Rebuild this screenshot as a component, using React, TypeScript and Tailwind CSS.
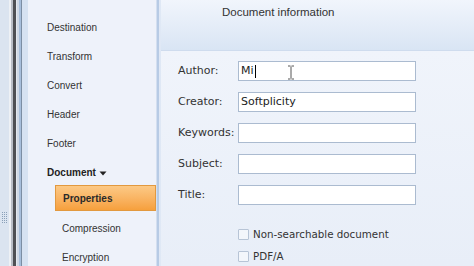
import React from "react";

const sideItems = ["Destination", "Transform", "Convert", "Header", "Footer"];

function Field({ label, value, caret }: { label: string; value?: string; caret?: boolean }) {
  return (
    <div className="flex items-center h-[20px]">
      <div className="w-[60px] text-[11px] text-[#333]" style={{ fontFamily: '"DejaVu Sans", sans-serif' }}>
        {label}
      </div>
      <div className="relative w-[178px] h-[20px] border border-[#abbbd0] bg-white flex items-center pl-[2px] text-[11px] text-[#222]" style={{ fontFamily: '"DejaVu Sans", sans-serif' }}>
        <span>{value}</span>
        {caret && <span className="w-px h-[13px] bg-black ml-px" />}
        {caret && (
          <svg className="absolute left-[48px] top-[3px]" width="8" height="15" viewBox="0 0 8 15">
            <path d="M1 1h2.5M4.5 1H7M4 1.5v12M1 14h2.5M4.5 14H7" stroke="#555" strokeWidth="1" fill="none" />
          </svg>
        )}
      </div>
    </div>
  );
}

function Check({ label }: { label: string }) {
  return (
    <div className="flex items-center h-[11px] gap-[4px]">
      <div className="w-[11px] h-[11px] border border-[#b7c4d6] bg-[#f3f6fb] rounded-[1px]" />
      <span className="text-[10.3px] text-[#333]" style={{ fontFamily: '"DejaVu Sans", sans-serif' }}>{label}</span>
    </div>
  );
}

export default function App() {
  return (
    <div className="w-[474px] h-[266px] flex overflow-hidden bg-[#edf2fa]">
      {/* left window edge */}
      <div className="flex w-[28px] h-full shrink-0">
        <div className="w-[9px] bg-[#dbe4f0] flex flex-col items-center pt-[212px]">
          <div className="grid grid-cols-3 gap-[1px]">
            {Array.from({ length: 18 }).map((_, i) => (
              <div key={i} className="w-[1px] h-[1px] bg-[#8aa0b8]" />
            ))}
          </div>
        </div>
        <div className="w-[2px] bg-[#eef1f5]" />
        <div className="w-[2px] bg-[#b9bec6]" />
        <div className="w-[3px] bg-[#4e5054]" />
        <div className="w-[1px] bg-[#e4e8ee]" />
        <div className="w-[2px] bg-[#cfd9e6]" />
        <div className="w-[2px] bg-[#a6bedb]" />
        <div className="w-[1px] bg-[#7c8ea3]" />
        <div className="w-[6px] bg-[#d6e2f1]" />
      </div>

      {/* sidebar */}
      <div className="w-[128px] shrink-0 bg-[#eef2fa] flex flex-col" style={{ fontFamily: '"Liberation Sans", Arial, sans-serif' }}>
        <div className="flex flex-col pl-[19px] pt-[21px] gap-[15px] text-[10px] text-[#333]">
          {sideItems.map((s) => (
            <div key={s} className="h-[14px] leading-[14px]">{s}</div>
          ))}
          <div className="h-[14px] leading-[14px] font-bold text-[#222] flex items-center gap-[3px]">
            Document
            <svg width="8" height="5" viewBox="0 0 8 5"><path d="M0.5 0.5h7L4 4.5z" fill="#222" /></svg>
          </div>
        </div>
        <div className="mt-[5px] ml-[27px] h-[26px] border border-[#e2993f] bg-gradient-to-b from-[#fcc985] to-[#f6a03c] flex items-center pl-[7px] pt-[1px] text-[10px] font-bold text-[#2a2a2a]">
          Properties
        </div>
        <div className="flex flex-col pl-[34px] pt-[11px] gap-[15px] text-[10px] text-[#333]">
          <div className="h-[14px] leading-[14px]">Compression</div>
          <div className="h-[14px] leading-[14px]">Encryption</div>
        </div>
      </div>

      {/* divider */}
      <div className="flex h-full shrink-0">
        <div className="w-[1px] bg-[#d3dff0]" />
        <div className="w-[2px] bg-[#b7cbe5]" />
        <div className="w-[2px] bg-[#dfe8f5]" />
      </div>

      {/* main */}
      <div className="flex-1 flex flex-col">
        <div className="h-[51px] bg-gradient-to-b from-[#f1f5fc] to-[#d9e5f4] border-b border-[#cfdcee] flex pl-[61px] pt-[4px] text-[11.5px] text-[#333]" style={{ fontFamily: '"Liberation Sans", Arial, sans-serif' }}>
          Document information
        </div>
        <div className="flex-1 bg-gradient-to-b from-[#f0f4fb] to-[#e8eef8] flex flex-col pl-[17px] pt-[10px]">
          <div className="flex flex-col gap-[11px]">
            <Field label="Author:" value="Mi" caret />
            <Field label="Creator:" value="Softplicity" />
            <Field label="Keywords:" />
            <Field label="Subject:" />
            <Field label="Title:" />
          </div>
          <div className="flex flex-col gap-[11px] pl-[60px] pt-[24px]">
            <Check label="Non-searchable document" />
            <Check label="PDF/A" />
          </div>
        </div>
      </div>
    </div>
  );
}
